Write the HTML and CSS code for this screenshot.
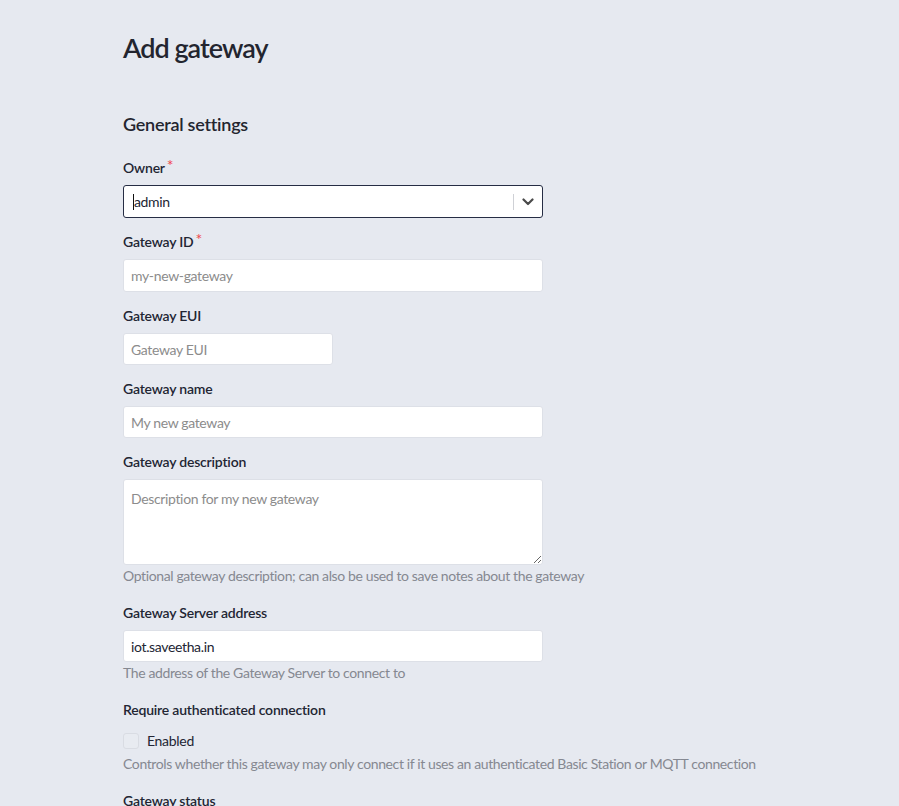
FILE: index.html
```html
<!DOCTYPE html>
<html lang="en">
<head>
<meta charset="utf-8">
<title>Add gateway</title>
<link rel="stylesheet" href="styles.css">
</head>
<body>
<main class="page">
  <h1 class="title">Add gateway</h1>
  <h2 class="section">General settings</h2>

  <div class="field">
    <label class="label">Owner<span class="req">*</span></label>
    <div class="select">
      <div class="select-value"><span class="caret"></span>admin</div>
      <div class="select-indicators">
        <span class="sep"></span>
        <svg class="chev" width="12" height="8" viewBox="0 0 12 8"><path d="M1.5 1.5 L6 6 L10.5 1.5" fill="none" stroke="#4a4a4a" stroke-width="2.2" stroke-linecap="round" stroke-linejoin="round"/></svg>
      </div>
    </div>
  </div>

  <div class="field">
    <label class="label">Gateway ID<span class="req">*</span></label>
    <input class="input input-tall" type="text" placeholder="my-new-gateway">
  </div>

  <div class="field">
    <label class="label">Gateway EUI</label>
    <input class="input input-half" type="text" placeholder="Gateway EUI">
  </div>

  <div class="field">
    <label class="label">Gateway name</label>
    <input class="input" type="text" placeholder="My new gateway">
  </div>

  <div class="field">
    <label class="label">Gateway description</label>
    <textarea class="input textarea" placeholder="Description for my new gateway"></textarea>
    <p class="help">Optional gateway description; can also be used to save notes about the gateway</p>
  </div>

  <div class="field">
    <label class="label">Gateway Server address</label>
    <input class="input" type="text" value="iot.saveetha.in">
    <p class="help">The address of the Gateway Server to connect to</p>
  </div>

  <div class="field">
    <label class="label">Require authenticated connection</label>
    <div class="check-row">
      <span class="checkbox"></span>
      <span class="check-text">Enabled</span>
    </div>
    <p class="help">Controls whether this gateway may only connect if it uses an authenticated Basic Station or MQTT connection</p>
  </div>

  <div class="field">
    <label class="label">Gateway status</label>
  </div>
</main>
</body>
</html>
```

FILE: styles.css
```css
* { box-sizing: border-box; }
html, body { margin: 0; padding: 0; background: #e6e9f0; }
body {
  font-family: "Lato", "Liberation Sans", sans-serif;
  color: #222533;
  font-size: 14px;
}
.page {
  padding: 31px 0 0 123px;
  width: 899px;
}
.title {
  margin: 0;
  font-size: 27px;
  line-height: 34px;
  font-weight: 600;
  letter-spacing: -1px;
  color: #23252f;
}
.section {
  margin: 47px 0 22px;
  font-size: 18px;
  line-height: 24px;
  font-weight: 600;
  letter-spacing: -0.25px;
  color: #23252f;
}
.field {
  margin-bottom: 14px;
}
.label {
  display: block;
  font-size: 14px;
  line-height: 20px;
  font-weight: 600;
  letter-spacing: -0.2px;
  margin-bottom: 7px;
  color: #222533;
}
.req {
  color: #f0464b;
  margin-left: 2px;
  font-size: 16px;
  font-weight: 400;
  vertical-align: 2px;
  line-height: 0;
}
.input {
  display: block;
  width: 420px;
  height: 32px;
  margin: 0;
  padding: 0 7px;
  border: 1px solid #dde0e7;
  border-radius: 3px;
  background: #fff;
  font-family: inherit;
  font-size: 14px;
  letter-spacing: -0.35px;
  color: #222533;
  outline: none;
}
.input::placeholder { color: #8c8c8c; }
.input-tall { height: 33px; }
.input-half { width: 210px; }
.textarea {
  height: 86px;
  padding: 10px 7px;
  resize: vertical;
  line-height: 18px;
}
.help {
  margin: 1px 0 0;
  padding-bottom: 3px;
  font-size: 14px;
  line-height: 20px;
  letter-spacing: -0.38px;
  color: #858891;
}
.select {
  display: flex;
  align-items: center;
  width: 420px;
  height: 33px;
  background: #fff;
  border: 1px solid #262d44;
  border-radius: 3px;
}
.select-value {
  flex: 1;
  padding-left: 9px;
  display: flex;
  align-items: center;
  letter-spacing: -0.35px;
  color: #222533;
}
.caret {
  display: inline-block;
  width: 1px;
  height: 16px;
  background: #111;
}
.select-indicators {
  display: flex;
  align-items: center;
  height: 100%;
}
.sep {
  width: 1px;
  height: 16px;
  background: #cfd1d6;
}
.chev {
  margin: 0 8px 0 8px;
  display: block;
}
.check-row {
  display: flex;
  align-items: center;
  height: 20px;
  margin-top: 11px;
}
.checkbox {
  width: 16px;
  height: 16px;
  border: 1px solid #d9dce3;
  border-radius: 3px;
  background: #e8ebf1;
  margin-right: 8px;
}
.check-text {
  color: #222533;
  line-height: 20px;
  letter-spacing: -0.3px;
}
.check-row + .help { margin-top: 3px; }
```
